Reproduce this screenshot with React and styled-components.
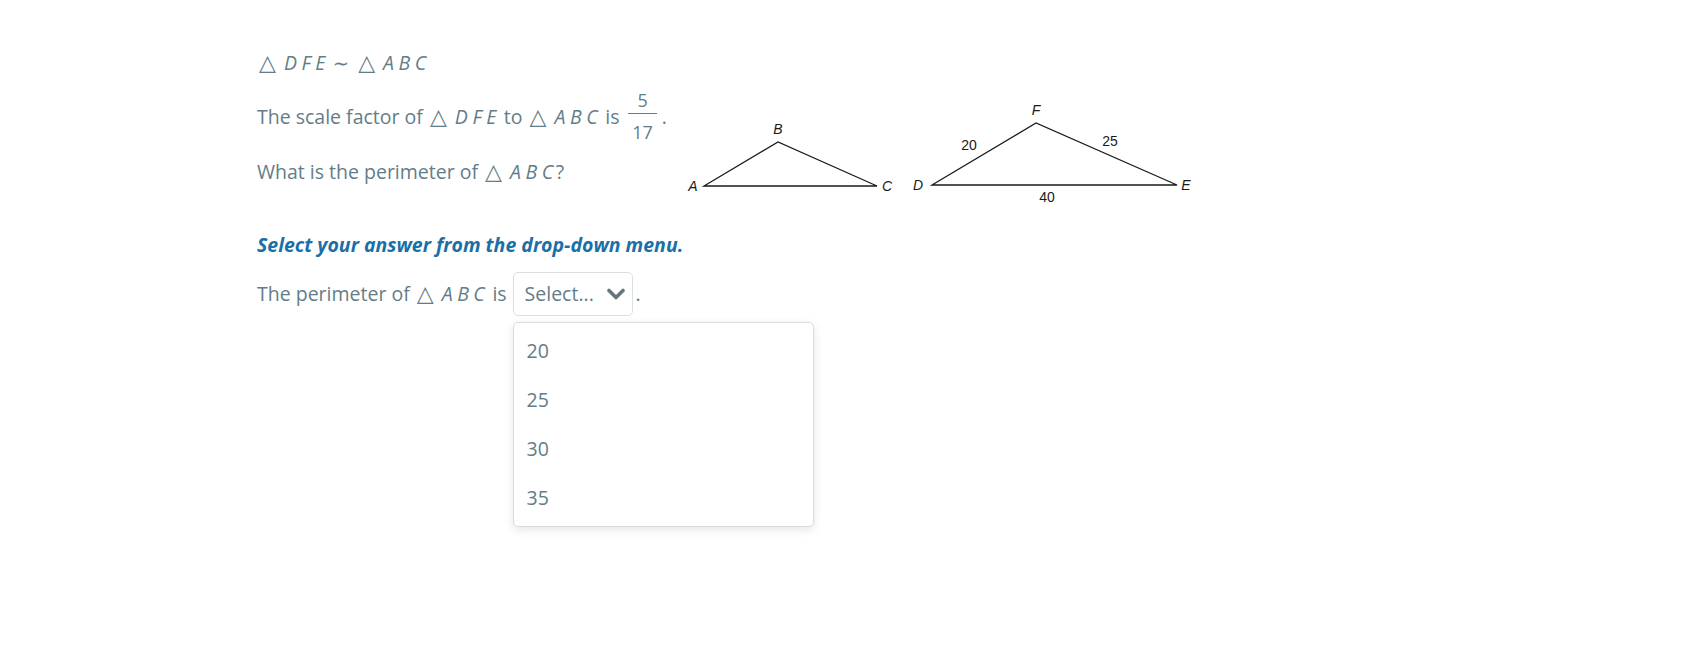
import React from "react";
import styled, { createGlobalStyle } from "styled-components";

const GlobalStyle = createGlobalStyle`
	body {
		margin: 0;
		background: #ffffff;
		font-family: "Open Sans", "DejaVu Sans", sans-serif;
		color: #637d88;
	}
`;

const Page = styled.main`
	padding: 48px 0 0 257px;
	min-height: 656px;
	box-sizing: border-box;
	font-size: 19.5px;
`;

const Line = styled.p`
	margin: ${(props) => props.$mt || 0}px 0 0;
	line-height: 30px;
	white-space: nowrap;
`;

const Row = styled.div`
	display: flex;
	align-items: flex-start;
	margin-top: 11px;
`;

const TextCol = styled.div`
	width: 423px;
	flex: none;
`;

const Figure = styled.svg`
	display: block;
	margin-top: 10px;
	flex: none;
`;

const Tri = styled.span`
	font-family: "DejaVu Sans", sans-serif;
	font-size: 22px;
	line-height: 1;
	margin: 0 8px 0 2px;
`;

const Var = styled.i`
	letter-spacing: 4.5px;
	margin-right: -2px;
`;

const Sim = styled.span`
	margin: 0 7px 0 5px;
	font-family: "DejaVu Sans", sans-serif;
`;

const Frac = styled.span`
	display: inline-flex;
	flex-direction: column;
	align-items: center;
	vertical-align: 17px;
	margin: 0 5px 0 9px;
	font-size: 18px;
	line-height: 20px;
`;

const Num = styled.span`
	padding: 0 9px 3px;
	border-bottom: 1px solid #637d88;
	align-self: stretch;
	text-align: center;
`;

const Den = styled.span`
	padding-top: 8px;
`;

const Instruction = styled.p`
	margin: 20px 0 0;
	line-height: 30px;
	font-weight: 700;
	font-style: italic;
	color: #1b6fa7;
`;

const AnswerRow = styled.div`
	display: flex;
	align-items: center;
	margin-top: 12px;
	line-height: 30px;
	white-space: nowrap;
`;

const SelectWrap = styled.div`
	position: relative;
	margin-left: 6px;
`;

const SelectBox = styled.div`
	width: 120px;
	height: 44px;
	box-sizing: border-box;
	border: 1px solid #dcdfe0;
	border-radius: 5px;
	padding: 0 6px 0 11px;
	display: flex;
	align-items: center;
	justify-content: space-between;
	color: #637d88;
`;

const Menu = styled.ul`
	position: absolute;
	top: calc(100% + 6px);
	left: 0;
	width: 301px;
	box-sizing: border-box;
	margin: 0;
	padding: 3px 0 4px;
	list-style: none;
	background: #ffffff;
	border: 1px solid #d9dcdd;
	border-radius: 5px;
	box-shadow: 0 3px 10px rgba(0, 0, 0, 0.1);
	z-index: 10;
`;

const Option = styled.li`
	height: 49px;
	line-height: 49px;
	padding-left: 13px;
	color: #637d88;
`;

const Dot = styled.span`
	margin-left: 3px;
`;

const Label = styled.text`
	font-family: "Liberation Sans", Arial, sans-serif;
	font-size: 14px;
	fill: #1a1a1a;
	text-anchor: middle;
	font-style: ${(props) => (props.$italic ? "italic" : "normal")};
`;

const Triangle = ({ name }) => (
	<>
		<Tri>△</Tri>
		<Var>{name}</Var>
	</>
);

const Chevron = () => (
	<svg width="20" height="12" viewBox="0 0 20 12">
		<path
			d="M3 2.5 L10 9.5 L17 2.5"
			fill="none"
			stroke="#66757c"
			strokeWidth="3.6"
			strokeLinecap="round"
			strokeLinejoin="round"
		/>
	</svg>
);

const Diagram = () => (
	<Figure width="520" height="110" viewBox="0 1 520 110">
		<g fill="none" stroke="#1a1a1a" strokeWidth="1.3" strokeLinejoin="miter">
			<polygon points="24,87 98,43 197,87" />
			<polygon points="252,86 356,24 497,86" />
		</g>
		<Label $italic x="13" y="92">A</Label>
		<Label $italic x="98" y="35">B</Label>
		<Label $italic x="207" y="92">C</Label>
		<Label $italic x="238" y="91">D</Label>
		<Label $italic x="356" y="16">F</Label>
		<Label $italic x="506" y="91">E</Label>
		<Label x="289" y="51">20</Label>
		<Label x="430" y="47">25</Label>
		<Label x="367" y="103">40</Label>
	</Figure>
);

const options = [20, 25, 30, 35];

export default function App() {
	return (
		<>
			<GlobalStyle />
			<Page>
				<Line>
					<Triangle name="DFE" />
					<Sim>∼</Sim>
					<Triangle name="ABC" />
				</Line>

				<Row>
					<TextCol>
						<Line>
							The scale factor of <Triangle name="DFE" /> to{" "}
							<Triangle name="ABC" /> is
							<Frac>
								<Num>5</Num>
								<Den>17</Den>
							</Frac>
							.
						</Line>
						<Line $mt={15}>
							What is the perimeter of <Triangle name="ABC" />?
						</Line>
					</TextCol>
					<Diagram />
				</Row>

				<Instruction>Select your answer from the drop-down menu.</Instruction>

				<AnswerRow>
					<span>
						The perimeter of <Triangle name="ABC" /> is
					</span>
					<SelectWrap>
						<SelectBox>
							Select...
							<Chevron />
						</SelectBox>
						<Menu>
							{options.map((value) => (
								<Option key={value}>{value}</Option>
							))}
						</Menu>
					</SelectWrap>
					<Dot>.</Dot>
				</AnswerRow>
			</Page>
		</>
	);
}
